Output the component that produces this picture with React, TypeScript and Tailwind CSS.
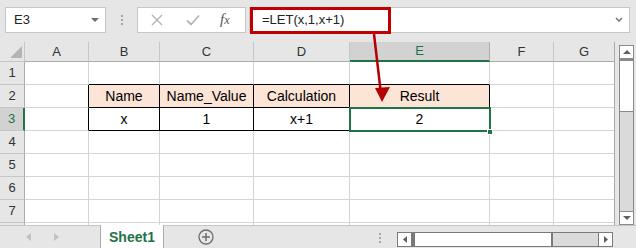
import React from "react";

const COLS = ["A", "B", "C", "D", "E", "F", "G"];
const COL_W = [64, 71, 94, 96, 140, 64, 61];
const ROWS = [1, 2, 3, 4, 5, 6, 7];

const content: Record<string, string> = {
  B2: "Name",
  C2: "Name_Value",
  D2: "Calculation",
  E2: "Result",
  B3: "x",
  C3: "1",
  D3: "x+1",
  E3: "2",
};

function inTable(r: number, c: number) {
  return r >= 2 && r <= 3 && c >= 1 && c <= 4;
}

function Cell({ r, c }: { r: number; c: number }) {
  const key = COLS[c] + r;
  const t = inTable(r, c);
  const rightBlack = t || (r >= 2 && r <= 3 && c === 0);
  const bottomBlack = t || (r === 1 && c >= 1 && c <= 4);
  const header = r === 2 && c >= 1 && c <= 4;
  return (
    <div
      className={
        "flex items-center justify-center text-[14px] text-black border-r border-b " +
        (rightBlack ? "border-r-black " : "border-r-[#d4d4d4] ") +
        (bottomBlack ? "border-b-black " : "border-b-[#d4d4d4] ") +
        (header ? "bg-[#fce4d6]" : "bg-white")
      }
      style={{ width: COL_W[c], height: 23 }}
    >
      {content[key] ?? ""}
    </div>
  );
}

export default function App() {
  return (
    <div
      className="relative w-[636px] h-[248px] overflow-hidden bg-[#e6e6e6] select-none"
      style={{ fontFamily: '"Liberation Sans", Arial, sans-serif' }}
    >
      {/* Toolbar / formula bar */}
      <div className="h-[42px] flex items-start pt-[7px] pl-[5px]">
        <div className="w-[101px] h-[26px] bg-white border border-[#c6c6c6] flex items-center justify-between pl-[8px] pr-[6px]">
          <span className="text-[13px] text-[#222]">E3</span>
          <svg width="8" height="5" viewBox="0 0 8 5">
            <path d="M0 0 L8 0 L4 4 Z" fill="#6e6e6e" />
          </svg>
        </div>
        <div className="w-[31px] h-[26px] flex flex-col items-center justify-center gap-[2px]">
          <div className="w-[2px] h-[2px] bg-[#a6a6a6]" />
          <div className="w-[2px] h-[2px] bg-[#a6a6a6]" />
          <div className="w-[2px] h-[2px] bg-[#a6a6a6]" />
        </div>
        <div className="w-[109px] h-[26px] bg-white border border-[#c6c6c6] flex items-center relative">
          <svg className="absolute left-[13px] top-[6px]" width="12" height="12" viewBox="0 0 12 12">
            <path d="M1 1 L11 11 M11 1 L1 11" stroke="#b4b4b4" strokeWidth="1.4" />
          </svg>
          <svg className="absolute left-[48px] top-[6px]" width="14" height="12" viewBox="0 0 14 12">
            <path d="M1 6.5 L5 10.5 L13 1.5" stroke="#b4b4b4" strokeWidth="1.8" fill="none" />
          </svg>
          <span
            className="absolute left-[82px] top-[4px] text-[15px] leading-none italic text-[#555] flex items-baseline"
            style={{ fontFamily: '"Liberation Serif", "Times New Roman", serif' }}
          >
            <span>f</span>
            <span className="text-[12px]">x</span>
          </span>
        </div>
        <div className="ml-[3px] w-[381px] h-[26px] bg-white border border-[#c6c6c6] flex items-center justify-between pl-[12px] pr-[6px]">
          <span className="text-[13px] text-[#222]">=LET(x,1,x+1)</span>
          <svg width="8" height="6" viewBox="0 0 8 6">
            <path d="M1 1 L4 4 L7 1" stroke="#6e6e6e" strokeWidth="1.4" fill="none" />
          </svg>
        </div>
      </div>

      {/* Sheet area */}
      <div className="flex h-[183px]">
        <div className="relative w-[615px] bg-white overflow-hidden">
          {/* Column headers */}
          <div className="flex h-[20px]">
            <div className="w-[25px] h-[20px] bg-[#e6e6e6] border-r border-b border-[#c6c6c6] relative">
              <svg className="absolute right-[2px] bottom-[3px]" width="12" height="12" viewBox="0 0 12 12">
                <path d="M12 0 L12 12 L0 12 Z" fill="#b4b4b4" />
              </svg>
            </div>
            {COLS.map((col, i) =>
              col === "E" ? (
                <div
                  key={col}
                  className="h-[20px] bg-[#d2d2d2] border-r border-r-[#ababab] border-b-2 border-b-[#217346] flex items-center justify-center text-[13px] text-[#217346]"
                  style={{ width: COL_W[i] }}
                >
                  {col}
                </div>
              ) : (
                <div
                  key={col}
                  className="h-[20px] bg-[#e6e6e6] border-r border-r-[#c6c6c6] border-b border-b-[#ababab] flex items-center justify-center text-[13px] text-[#333]"
                  style={{ width: COL_W[i] }}
                >
                  {col}
                </div>
              )
            )}
          </div>
          {/* Rows */}
          {[...ROWS, 8].map((r) => (
            <div key={r} className="flex h-[23px]">
              {r === 3 ? (
                <div className="w-[25px] h-[23px] bg-[#d2d2d2] border-r-2 border-r-[#217346] border-b border-b-[#c6c6c6] flex items-center justify-center text-[13px] text-[#217346]">
                  {r}
                </div>
              ) : (
                <div className="w-[25px] h-[23px] bg-[#e6e6e6] border-r border-r-[#ababab] border-b border-b-[#c6c6c6] flex items-center justify-center text-[13px] text-[#333]">
                  {r <= 7 ? r : ""}
                </div>
              )}
              {COLS.map((_, c) => (
                <Cell key={c} r={r} c={c} />
              ))}
            </div>
          ))}
          {/* Selection E3 */}
          <div className="absolute left-[349px] top-[65px] w-[142px] h-[25px] border-2 border-[#217346]" />
          <div className="absolute left-[487px] top-[87px] w-[6px] h-[6px] bg-[#217346] border border-white" />
          <div className="absolute right-0 top-0 bottom-0 w-px bg-[#ababab]" />
        </div>

        {/* Vertical scrollbar */}
        <div className="w-[21px] pl-[4px] pt-[3px] flex flex-col">
          <div className="w-[15px] h-[14px] bg-white border border-[#8a8a8a] flex items-center justify-center">
            <svg width="8" height="4" viewBox="0 0 8 4">
              <path d="M0 4 L4 0 L8 4 Z" fill="#606060" />
            </svg>
          </div>
          <div className="w-[15px] h-[54px] bg-white border border-[#8a8a8a] border-t-[3px] border-t-[#8a8a8a] -mt-px" />
          <div className="w-[15px] h-[99px] bg-[#dadada] border-x border-[#8a8a8a]" />
          <div className="w-[15px] h-[14px] bg-white border border-[#8a8a8a] flex items-center justify-center">
            <svg width="8" height="4" viewBox="0 0 8 4">
              <path d="M0 0 L8 0 L4 4 Z" fill="#606060" />
            </svg>
          </div>
        </div>
      </div>

      {/* Tab bar */}
      <div className="h-[23px] flex border-t border-[#c6c6c6]">
        <div className="w-[100px] flex items-center">
          <svg className="ml-[26px]" width="5" height="8" viewBox="0 0 5 8">
            <path d="M5 0 L5 8 L0 4 Z" fill="#c0c0c0" />
          </svg>
          <svg className="ml-[23px]" width="5" height="8" viewBox="0 0 5 8">
            <path d="M0 0 L0 8 L5 4 Z" fill="#c0c0c0" />
          </svg>
        </div>
        <div className="w-[64px] -mt-px h-[24px] bg-white border-x border-[#ababab] flex items-center justify-center text-[14px] font-bold text-[#217346]">
          Sheet1
        </div>
        <div className="w-[219px] flex items-center">
          <svg className="ml-[34px]" width="16" height="16" viewBox="0 0 16 16">
            <circle cx="8" cy="8" r="7" stroke="#6e6e6e" strokeWidth="1.3" fill="none" />
            <path d="M8 4 V12 M4 8 H12" stroke="#6e6e6e" strokeWidth="1.5" />
          </svg>
          <div className="ml-auto mr-[2px] flex flex-col gap-[2px] mt-[2px]">
            <div className="w-[2px] h-[2px] bg-[#a6a6a6]" />
            <div className="w-[2px] h-[2px] bg-[#a6a6a6]" />
            <div className="w-[2px] h-[2px] bg-[#a6a6a6]" />
          </div>
        </div>
        <div className="ml-[14px] mt-[6px] w-[216px] h-[15px] flex border border-[#7a7a7a] bg-[#dadada]">
          <div className="w-[14px] h-full bg-white border-r border-[#7a7a7a] flex items-center justify-center">
            <svg width="4" height="7" viewBox="0 0 4 7">
              <path d="M4 0 L4 7 L0 3.5 Z" fill="#606060" />
            </svg>
          </div>
          <div className="w-[141px] h-full bg-white border-x-2 border-x-[#7a7a7a] border-l-[3px]" />
          <div className="flex-1" />
          <div className="w-[14px] h-full bg-white border-l border-[#7a7a7a] flex items-center justify-center">
            <svg width="4" height="7" viewBox="0 0 4 7">
              <path d="M0 0 L0 7 L4 3.5 Z" fill="#606060" />
            </svg>
          </div>
        </div>
      </div>

      {/* Red highlight around formula */}
      <div className="absolute left-[250px] top-[7px] w-[141px] h-[27px] border-[3px] border-[#c00000]" />

      {/* Red arrow */}
      <svg className="absolute left-0 top-0 pointer-events-none" width="636" height="248">
        <line x1="374" y1="34" x2="380.5" y2="90" stroke="#b40000" strokeWidth="2.5" />
        <polygon points="375,88 390,87 382,102" fill="#b40000" />
      </svg>
    </div>
  );
}
